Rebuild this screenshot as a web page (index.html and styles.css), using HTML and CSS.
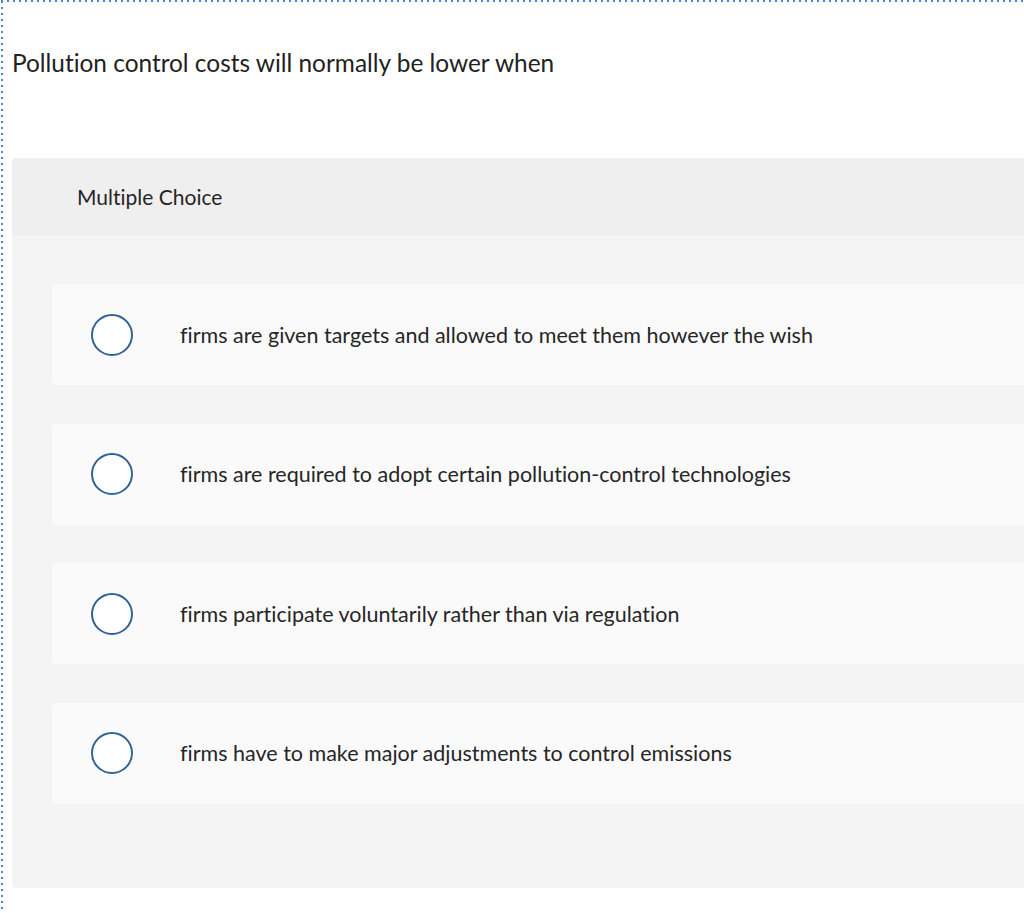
FILE: index.html
```html
<!DOCTYPE html>
<html lang="en">
<head>
<meta charset="utf-8">
<title>Multiple Choice Question</title>
<link rel="stylesheet" href="styles.css">
</head>
<body>
<div class="frame">
  <p class="question">Pollution control costs will normally be lower when</p>
  <section class="panel">
    <div class="panel-head">Multiple Choice</div>
    <div class="options">
      <label class="option"><span class="radio"></span><span class="option-text">firms are given targets and allowed to meet them however the wish</span></label>
      <label class="option"><span class="radio"></span><span class="option-text">firms are required to adopt certain pollution-control technologies</span></label>
      <label class="option"><span class="radio"></span><span class="option-text">firms participate voluntarily rather than via regulation</span></label>
      <label class="option"><span class="radio"></span><span class="option-text">firms have to make major adjustments to control emissions</span></label>
    </div>
  </section>
</div>
</body>
</html>
```
FILE: styles.css
```css
html, body {
  margin: 0;
  padding: 0;
  background: #ffffff;
  overflow: hidden;
}

body {
  font-family: Lato, "Open Sans", Arial, sans-serif;
  font-variant-ligatures: none;
  color: #262626;
}

.frame {
  height: 913px;
  padding: 0 0 0 12px;
  box-sizing: border-box;
  background-image:
    linear-gradient(to right, #4a84cc 2px, transparent 2px),
    linear-gradient(to bottom, #4a84cc 2px, transparent 2px);
  background-size: 6px 2px, 2px 6px;
  background-repeat: repeat-x, repeat-y;
  background-position: 1px 0, 1px 1px;
  overflow: hidden;
}

.question {
  margin: 0;
  padding-top: 48px;
  font-size: 24.4px;
  line-height: 29px;
  color: #222;
}

.panel {
  margin-top: 81px;
  margin-right: -60px;
  background: #f4f4f4;
  border-radius: 4px;
  overflow: hidden;
}

.panel-head {
  height: 77px;
  display: flex;
  align-items: center;
  padding-left: 65px;
  background: #efefef;
  font-size: 21px;
  color: #262626;
}

.options {
  display: flex;
  flex-direction: column;
  gap: 38.5px;
  padding: 49px 0 84px 40px;
}

.option {
  height: 101px;
  display: flex;
  align-items: center;
  padding-left: 39px;
  background: #fafafa;
  border-radius: 4px;
  box-sizing: border-box;
}

.radio {
  width: 42px;
  height: 42px;
  box-sizing: border-box;
  border: 2px solid #2f6397;
  border-radius: 50%;
  background: #ffffff;
  flex: none;
}

.option-text {
  margin-left: 47px;
  font-size: 21.5px;
  color: #262626;
}
```
